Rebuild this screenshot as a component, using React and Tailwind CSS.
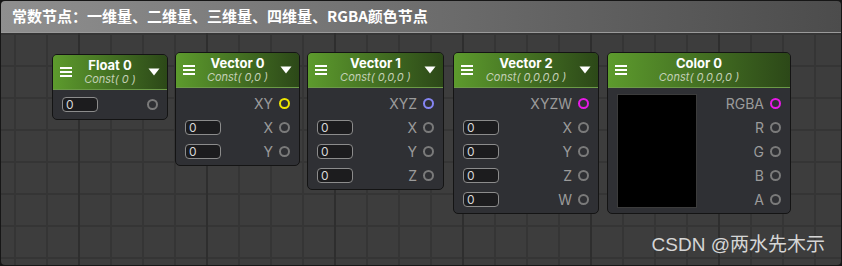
const portColors = {
  gray: 'border-[#7a7a7a]',
  yellow: 'border-[#eee600]',
  blue: 'border-[#8585f2]',
  pink: 'border-[#e619e6]',
};

function Port({ color = 'gray' }) {
  return <span className={`w-[11px] h-[11px] rounded-full border-[2.5px] ${portColors[color]} shrink-0`} />;
}

function NumberField() {
  return (
    <div className="w-[36px] h-[15px] rounded-[4px] border border-[#8c8c8c] bg-[#1c1c1e] text-[#d8d8d8] text-[12px] leading-[13px] pl-[3px]">
      0
    </div>
  );
}

function Hamburger() {
  return (
    <div className="w-3 flex flex-col gap-[2px] shrink-0">
      <span className="h-[2px] bg-white" />
      <span className="h-[2px] bg-white" />
      <span className="h-[2px] bg-white" />
    </div>
  );
}

function Row({ label, field, color }) {
  return (
    <div className="h-6 flex items-center">
      {field && <NumberField />}
      <div className="flex-1 flex items-center justify-end gap-[6px]">
        {label && <span className="text-[14px] text-[#9b9b9b]">{label}</span>}
        <Port color={color} />
      </div>
    </div>
  );
}

function Node({ title, sub, width, rows, dropdown = true, swatch = false, className = '' }) {
  return (
    <div className={`${width} shrink-0 rounded-[5px] border border-[#141414] bg-[#2f3034] overflow-hidden ${className}`}>
      <div className="h-[35px] flex items-center px-[7px] bg-[linear-gradient(to_right,#5d9b2d,#2c4818)] border-b border-[#6c9a48]">
        <Hamburger />
        <div className="flex-1 flex flex-col items-center">
          <span className="text-white font-bold text-[13px] leading-[15px]">{title}</span>
          <span className="text-[#c3d0b6] italic text-[11px] leading-[13px]">{sub}</span>
        </div>
        {dropdown ? (
          <svg width="12" height="8" viewBox="0 0 12 8" className="shrink-0">
            <path d="M0.5 0.5 L11.5 0.5 L6 7.5 Z" fill="white" />
          </svg>
        ) : (
          <span className="w-3 shrink-0" />
        )}
      </div>
      <div className={`flex px-[9px] ${title === 'Float 0' ? 'pt-[2px] pb-[3px]' : 'pt-[3px] pb-[2px]'}`}>
        {swatch && <div className="w-[80px] h-[114px] mt-[3px] bg-black border border-[#3c3c3c]" />}
        <div className="flex-1">
          {rows.map((r, i) => (
            <Row key={i} {...r} />
          ))}
        </div>
      </div>
    </div>
  );
}

export default function App() {
  return (
    <div className="w-[842px] h-[266px] bg-[#161616] p-px font-['Inter','Noto_Sans',sans-serif]">
      <div className="relative w-full h-full rounded-[4px] overflow-hidden flex flex-col">
        <div className="h-[32px] shrink-0 flex items-center px-[11px] bg-[linear-gradient(to_right,#8f8f8f,#4c4c4c)] border-b border-[#9a9a9a]">
          <span className="text-white font-bold text-[15px] font-['Noto_Sans_CJK_SC',sans-serif]">
            常数节点：一维量、二维量、三维量、四维量、RGBA颜色节点
          </span>
        </div>
        <div className="flex-1 bg-[#3d3d3d] [background-image:linear-gradient(to_right,#2e2e2e_2px,transparent_2px),linear-gradient(to_right,#353535_2px,transparent_2px),linear-gradient(to_bottom,#353535_2px,transparent_2px)] [background-size:128px_100%,32px_32px,32px_32px] [background-position:77px_0,13px_0,0_0]">
          <div className="flex items-start pl-[51px] pt-[19px]">
            <Node
              title="Float 0"
              sub="Const( 0 )"
              width="w-[116px]"
              className="mt-[2px]"
              rows={[{ field: true }]}
            />
            <Node
              title="Vector 0"
              sub="Const( 0,0 )"
              width="w-[125px]"
              className="ml-[7px]"
              rows={[
                { label: 'XY', color: 'yellow' },
                { label: 'X', field: true },
                { label: 'Y', field: true },
              ]}
            />
            <Node
              title="Vector 1"
              sub="Const( 0,0,0 )"
              width="w-[137px]"
              className="ml-[7px]"
              rows={[
                { label: 'XYZ', color: 'blue' },
                { label: 'X', field: true },
                { label: 'Y', field: true },
                { label: 'Z', field: true },
              ]}
            />
            <Node
              title="Vector 2"
              sub="Const( 0,0,0,0 )"
              width="w-[146px]"
              className="ml-[9px]"
              rows={[
                { label: 'XYZW', color: 'pink' },
                { label: 'X', field: true },
                { label: 'Y', field: true },
                { label: 'Z', field: true },
                { label: 'W', field: true },
              ]}
            />
            <Node
              title="Color 0"
              sub="Const( 0,0,0,0 )"
              width="w-[184px]"
              className="ml-[8px]"
              dropdown={false}
              swatch
              rows={[
                { label: 'RGBA', color: 'pink' },
                { label: 'R' },
                { label: 'G' },
                { label: 'B' },
                { label: 'A' },
              ]}
            />
          </div>
        </div>
        <span className="absolute right-[16px] bottom-[6px] text-[19px] text-[#d6d6d6] font-['Liberation_Sans','Noto_Sans_CJK_SC',sans-serif]">
          CSDN @两水先木示
        </span>
      </div>
    </div>
  );
}
